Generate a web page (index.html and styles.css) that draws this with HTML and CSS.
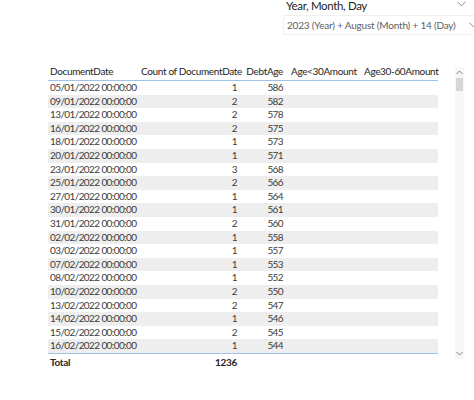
FILE: index.html
```html
<!DOCTYPE html>
<html>
<head>
<meta charset="utf-8">
<link rel="stylesheet" href="styles.css">
</head>
<body>
<div class="page">
  <div class="slicer">
    <div class="slicer-title">Year, Month, Day
      <svg class="chev top" width="9" height="6" viewBox="0 0 9 6"><path d="M0.5 0.8 L4.5 4.8 L8.5 0.8" fill="none" stroke="#888" stroke-width="1"/></svg>
    </div>
    <div class="slicer-box">
      <span class="slicer-value">2023 (Year) + August (Month) + 14 (Day)</span>
      <svg class="chev" width="9" height="6" viewBox="0 0 9 6"><path d="M0.5 0.8 L4.5 4.8 L8.5 0.8" fill="none" stroke="#888" stroke-width="1"/></svg>
    </div>
  </div>
  <div class="visual">
    <div class="table">
      <div class="row head">
        <div class="c1">DocumentDate</div><div class="c2">Count of DocumentDate</div><div class="c3">DebtAge</div><div class="c4">Age&lt;30Amount</div><div class="c5">Age30-60Amount</div>
      </div>
      <div class="body">
        <div class="row"><div class="c1">05/01/2022 00:00:00</div><div class="c2">1</div><div class="c3">586</div><div class="c4"></div><div class="c5"></div></div>
        <div class="row"><div class="c1">09/01/2022 00:00:00</div><div class="c2">2</div><div class="c3">582</div><div class="c4"></div><div class="c5"></div></div>
        <div class="row"><div class="c1">13/01/2022 00:00:00</div><div class="c2">2</div><div class="c3">578</div><div class="c4"></div><div class="c5"></div></div>
        <div class="row"><div class="c1">16/01/2022 00:00:00</div><div class="c2">2</div><div class="c3">575</div><div class="c4"></div><div class="c5"></div></div>
        <div class="row"><div class="c1">18/01/2022 00:00:00</div><div class="c2">1</div><div class="c3">573</div><div class="c4"></div><div class="c5"></div></div>
        <div class="row"><div class="c1">20/01/2022 00:00:00</div><div class="c2">1</div><div class="c3">571</div><div class="c4"></div><div class="c5"></div></div>
        <div class="row"><div class="c1">23/01/2022 00:00:00</div><div class="c2">3</div><div class="c3">568</div><div class="c4"></div><div class="c5"></div></div>
        <div class="row"><div class="c1">25/01/2022 00:00:00</div><div class="c2">2</div><div class="c3">566</div><div class="c4"></div><div class="c5"></div></div>
        <div class="row"><div class="c1">27/01/2022 00:00:00</div><div class="c2">1</div><div class="c3">564</div><div class="c4"></div><div class="c5"></div></div>
        <div class="row"><div class="c1">30/01/2022 00:00:00</div><div class="c2">1</div><div class="c3">561</div><div class="c4"></div><div class="c5"></div></div>
        <div class="row"><div class="c1">31/01/2022 00:00:00</div><div class="c2">2</div><div class="c3">560</div><div class="c4"></div><div class="c5"></div></div>
        <div class="row"><div class="c1">02/02/2022 00:00:00</div><div class="c2">1</div><div class="c3">558</div><div class="c4"></div><div class="c5"></div></div>
        <div class="row"><div class="c1">03/02/2022 00:00:00</div><div class="c2">1</div><div class="c3">557</div><div class="c4"></div><div class="c5"></div></div>
        <div class="row"><div class="c1">07/02/2022 00:00:00</div><div class="c2">1</div><div class="c3">553</div><div class="c4"></div><div class="c5"></div></div>
        <div class="row"><div class="c1">08/02/2022 00:00:00</div><div class="c2">1</div><div class="c3">552</div><div class="c4"></div><div class="c5"></div></div>
        <div class="row"><div class="c1">10/02/2022 00:00:00</div><div class="c2">2</div><div class="c3">550</div><div class="c4"></div><div class="c5"></div></div>
        <div class="row"><div class="c1">13/02/2022 00:00:00</div><div class="c2">2</div><div class="c3">547</div><div class="c4"></div><div class="c5"></div></div>
        <div class="row"><div class="c1">14/02/2022 00:00:00</div><div class="c2">1</div><div class="c3">546</div><div class="c4"></div><div class="c5"></div></div>
        <div class="row"><div class="c1">15/02/2022 00:00:00</div><div class="c2">2</div><div class="c3">545</div><div class="c4"></div><div class="c5"></div></div>
        <div class="row"><div class="c1">16/02/2022 00:00:00</div><div class="c2">1</div><div class="c3">544</div><div class="c4"></div><div class="c5"></div></div>
      </div>
      <div class="row total">
        <div class="c1">Total</div><div class="c2">1236</div><div class="c3"></div><div class="c4"></div><div class="c5"></div>
      </div>
    </div>
    <div class="scrollbar">
      <svg width="7" height="5" viewBox="0 0 7 5"><path d="M0.5 4 L3.5 1 L6.5 4" fill="none" stroke="#777" stroke-width="0.9"/></svg>
      <div class="thumb"></div>
      <div class="track"></div>
      <svg width="7" height="5" viewBox="0 0 7 5"><path d="M0.5 1 L3.5 4 L6.5 1" fill="none" stroke="#777" stroke-width="0.9"/></svg>
    </div>
  </div>
</div>
</body>
</html>
```
FILE: styles.css
```css
html, body {
  margin: 0;
  padding: 0;
  background: #ffffff;
}
body {
  font-family: "Lato", "Open Sans", sans-serif;
  color: #252423;
}
.page {
  width: 474px;
  height: 400px;
  position: relative;
  overflow: hidden;
}
.slicer {
  margin-left: 283px;
  margin-top: -1px;
  width: 200px;
}
.slicer-title {
  font-size: 11.5px;
  letter-spacing: -0.35px;
  line-height: 13px;
  color: #252423;
  padding-left: 3px;
  display: flex;
  align-items: center;
  white-space: nowrap;
}
.chev.top {
  margin-left: auto;
  margin-right: 17px;
  margin-top: -4px;
}
.slicer-box {
  margin-top: 3px;
  height: 18px;
  border: 1px solid #f0f0f0;
  display: flex;
  align-items: center;
  padding-left: 3px;
  font-size: 10px;
  letter-spacing: -0.2px;
  color: #605e5c;
  white-space: nowrap;
}
.slicer-value {
  flex: none;
}
.slicer-box .chev {
  margin-left: 13px;
  flex: none;
}
.visual {
  display: flex;
  margin-top: 28px;
  margin-left: 48px;
}
.table {
  width: 390px;
  font-size: 10px;
}
.row {
  display: grid;
  grid-template-columns: 90px 102px 46px 74px 78px;
  height: 13.6px;
  line-height: 13.6px;
  white-space: nowrap;
  color: #3c3c3c;
  letter-spacing: -0.6px;
}
.head {
  height: 17px;
  line-height: 17px;
  border-bottom: 1px solid #9fc3e7;
  color: #252423;
  letter-spacing: -0.35px;
}
.body .row:nth-child(even) {
  background: #eeeeee;
}
.body {
  border-bottom: 1px solid #9fc3e7;
}
.c1 { padding-left: 2px; }
.c2 { text-align: right; padding-right: 3px; }
.c3 { text-align: right; padding-right: 3px; }
.c4 { padding-left: 5px; }
.c5 { padding-left: 4px; }
.head .c2 { text-align: left; padding-left: 3px; padding-right: 0; }
.total {
  height: 16px;
  line-height: 16px;
  font-weight: 700;
  color: #252423;
  letter-spacing: -0.3px;
}
.scrollbar {
  margin-left: 17px;
  margin-top: 4px;
  width: 9px;
  height: 292px;
  background: #f6f6f6;
  display: flex;
  flex-direction: column;
  align-items: center;
}
.scrollbar svg {
  margin-top: 3px;
  flex: none;
}
.scrollbar svg:last-child {
  margin-top: 0;
  margin-bottom: 3px;
}
.thumb {
  width: 7px;
  height: 13px;
  margin-top: 3px;
  background: #d6d6d6;
}
.track {
  flex: 1;
}
```
